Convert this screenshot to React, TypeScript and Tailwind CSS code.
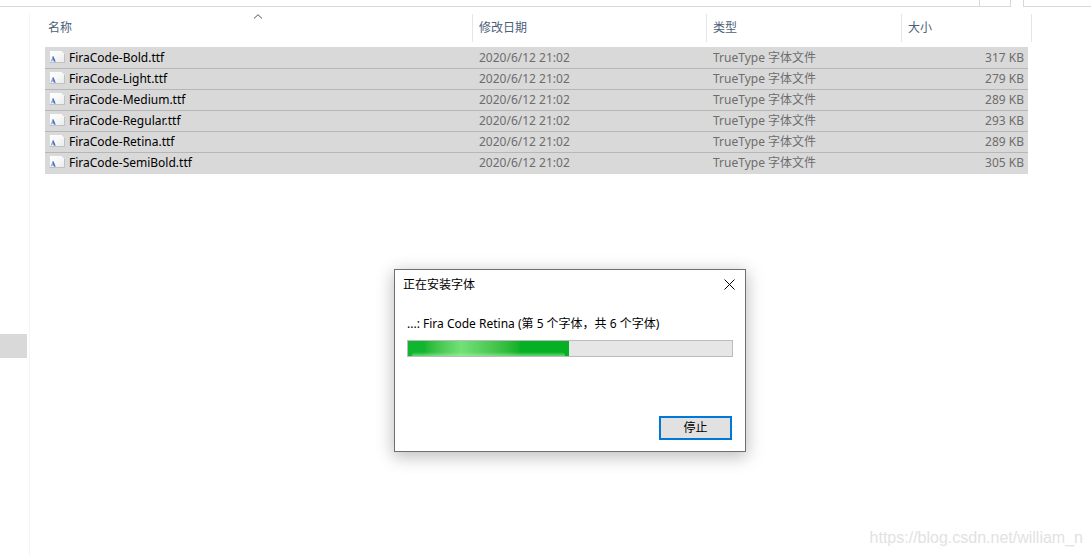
import { useId } from "react";

interface FontFile {
  name: string;
  size: string;
}

const files: FontFile[] = [
  { name: "FiraCode-Bold.ttf", size: "317 KB" },
  { name: "FiraCode-Light.ttf", size: "279 KB" },
  { name: "FiraCode-Medium.ttf", size: "289 KB" },
  { name: "FiraCode-Regular.ttf", size: "293 KB" },
  { name: "FiraCode-Retina.ttf", size: "289 KB" },
  { name: "FiraCode-SemiBold.ttf", size: "305 KB" },
];

const FontIcon = () => {
  const id = useId();

  return (
    <svg width="16" height="16" viewBox="0 0 16 16" aria-hidden="true" className="shrink-0">
      <defs>
        <linearGradient id={id} x1="0" y1="0" x2="1" y2="1">
          <stop offset="0" stopColor="#ffffff" />
          <stop offset="0.5" stopColor="#f8f8f8" />
          <stop offset="1" stopColor="#e9eaec" />
        </linearGradient>
      </defs>
      <path d="M0.5 0.5H12.5L15.5 3.5V12.5H0.5Z" fill={`url(#${id})`} stroke="#d2d3d5" strokeWidth="0.7" />
      <path d="M0.5 12.5H15.5V4" fill="none" stroke="#b9bbbe" strokeWidth="0.8" />
      <path d="M1.6 11.6L3.6 6.2H4.4L6.6 11.6H4.9L4.4 10.6H3.2L2.8 11.6Z" fill="#8fa8dc" />
      <path d="M3.6 6.8L4.4 6.2L6.6 11.6H4.9Z" fill="#4a6cba" />
    </svg>
  );
};

// bottom edge of the address and search boxes
const TopBar = () => (
  <div className="flex h-[7px] gap-3">
    <div className="flex flex-1 justify-end border-r border-b border-[#d9d9d9]">
      <div className="w-[31px] border-l border-[#d9d9d9]" />
    </div>
    <div className="w-[68px] border-b border-l border-[#d9d9d9]" />
  </div>
);

const headCell = "flex h-7 items-center border-r border-[#e5e5e5]";
const bodyCell =
  "h-[21px] border-b border-[#b7b7b7] bg-[#d9d9d9] p-0 group-first:h-[22px] group-first:pt-px group-last:border-[#d9d9d9]";

const FileTable = () => (
  <table className="w-full table-fixed border-separate border-spacing-0 text-left">
    <colgroup>
      <col />
      <col className="w-[234px]" />
      <col className="w-[195px]" />
      <col className="w-[126px]" />
      <col className="w-1" />
    </colgroup>
    <thead className="text-[#4c607a]">
      <tr>
        <th className="p-0 pb-[5px] font-normal" aria-sort="ascending">
          <div className={`${headCell} relative pl-[3px]`}>
            名称
            <svg
              width="9"
              height="5"
              viewBox="0 0 9 5"
              aria-hidden="true"
              className="absolute top-0 left-1/2 -translate-x-1/2"
            >
              <path d="M0.5 4.5L4.5 0.7L8.5 4.5" fill="none" stroke="#555555" />
            </svg>
          </div>
        </th>
        <th className="p-0 pb-[5px] font-normal">
          <div className={`${headCell} pl-1.5`}>修改日期</div>
        </th>
        <th className="p-0 pb-[5px] font-normal">
          <div className={`${headCell} pl-1.5`}>类型</div>
        </th>
        <th colSpan={2} className="p-0 pb-[5px] font-normal">
          <div className={`${headCell} pl-1.5`}>大小</div>
        </th>
      </tr>
    </thead>
    <tbody className="text-[#6d6d6d]">
      {files.map((file) => (
        <tr key={file.name} className="group">
          <td className={bodyCell}>
            <div className="flex items-center gap-1 pl-1 text-black">
              <FontIcon />
              {file.name}
            </div>
          </td>
          <td className={bodyCell}>
            <div className="pl-1.5">2020/6/12 21:02</div>
          </td>
          <td className={bodyCell}>
            <div className="pl-1.5">TrueType 字体文件</div>
          </td>
          <td className={bodyCell}>
            <div className="pr-1 text-right">{file.size}</div>
          </td>
        </tr>
      ))}
    </tbody>
  </table>
);

interface InstallDialogProps {
  message: string;
  progress: number;
}

const InstallDialog: React.FC<InstallDialogProps> = ({ message, progress }) => (
  <div
    role="dialog"
    aria-labelledby="install-title"
    className="absolute top-[269px] left-[394px] flex w-[352px] flex-col border border-[#6f6f6f] bg-white text-black shadow-[0_4px_16px_1px_rgba(0,0,0,0.26)]"
  >
    <div className="flex h-[30px] items-center justify-between px-2">
      <h1 id="install-title">正在安装字体</h1>
      <button type="button" aria-label="关闭" className="pr-0.5 pb-0.5">
        <svg width="11" height="11" viewBox="0 0 11 11" aria-hidden="true">
          <path d="M0.5 0.5L10.5 10.5M10.5 0.5L0.5 10.5" fill="none" stroke="#000000" />
        </svg>
      </button>
    </div>

    <div className="flex flex-col px-3 pt-4 pb-[11px]">
      <p className="h-6 whitespace-nowrap">{message}</p>
      <div
        role="progressbar"
        aria-label="正在安装字体"
        aria-valuenow={progress}
        className="h-[17px] border border-[#bcbcbc] bg-[#e6e6e6]"
      >
        <div
          className="flex h-full items-end bg-linear-to-r from-[#10b530] from-10% via-[#72e178] via-33% to-[#06b025] to-70%"
          style={{ width: `${progress}%` }}
        >
          <div className="mx-1 h-1 flex-1 rounded-t-full bg-linear-to-t from-[#a5f0a5]/60 to-transparent" />
        </div>
      </div>

      <button
        type="button"
        className="mt-[59px] mr-px h-6 w-[73px] self-end border-2 border-[#0078d7] bg-[#e1e1e1]"
      >
        停止
      </button>
    </div>
  </div>
);

export default function App() {
  return (
    <div className="relative flex min-h-screen flex-col overflow-hidden bg-white font-['Noto_Sans','Noto_Sans_CJK_SC',sans-serif] text-xs">
      <TopBar />

      <div className="flex flex-1 pt-[7px]">
        {/* navigation pane */}
        <nav className="w-[30px] border-r border-[#f5f5f5] pt-80 pr-0.5">
          <div className="h-6 bg-[#d9d9d9]" />
        </nav>

        <main className="flex-1 pr-[59px] pl-[15px]">
          <FileTable />
        </main>
      </div>

      <InstallDialog message="...: Fira Code Retina (第 5 个字体，共 6 个字体)" progress={49.7} />

      <div className="absolute right-2 bottom-1.5 font-['Liberation_Sans',sans-serif] text-base text-[#e2e2e2]">
        https://blog.csdn.net/william_n
      </div>
    </div>
  );
}
